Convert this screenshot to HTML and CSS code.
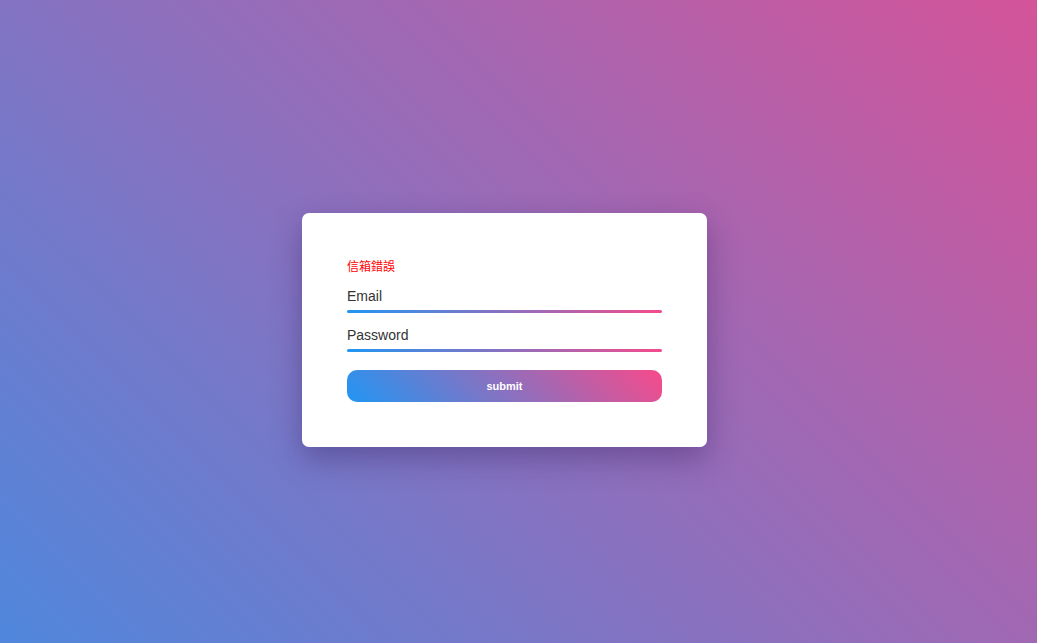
FILE: index.html
```html
<!DOCTYPE html>
<html lang="zh-Hant">
<head>
<meta charset="utf-8">
<title>Login</title>
<link rel="stylesheet" href="styles.css">
</head>
<body>
<main class="page">
  <form class="card">
    <div class="error">信箱錯誤</div>
    <label class="field">
      <input class="input" type="text" placeholder="Email">
      <span class="line"></span>
    </label>
    <label class="field">
      <input class="input" type="password" placeholder="Password">
      <span class="line"></span>
    </label>
    <button class="submit" type="button">submit</button>
  </form>
</main>
</body>
</html>
```
FILE: styles.css
```css
* { box-sizing: border-box; }
html, body {
  margin: 0;
  height: 100%;
}
body {
  font-family: "Liberation Sans", Arial, "Noto Sans CJK TC", sans-serif;
  background: linear-gradient(45deg, #4f87dc 0%, #d45499 100%);
  overflow: hidden;
}
.page {
  display: flex;
  align-items: flex-start;
  justify-content: flex-start;
  padding: 213px 0 0 302px;
  height: 100%;
}
.card {
  width: 405px;
  background: #fff;
  border-radius: 7px;
  padding: 45px;
  display: flex;
  flex-direction: column;
  box-shadow: 0 12px 30px rgba(40, 20, 80, 0.35);
}
.error {
  color: #ff0000;
  font-size: 12px;
  line-height: 14px;
  margin: 2px 0 11px;
  font-family: "Liberation Sans", "Noto Sans CJK TC", sans-serif;
}
.field {
  display: flex;
  flex-direction: column;
  margin-bottom: 11px;
}
.input {
  border: 0;
  outline: none;
  padding: 1px 0 0;
  height: 20px;
  line-height: 19px;
  font-size: 14px;
  font-family: "Liberation Sans", Arial, sans-serif;
  color: #333;
  background: transparent;
  margin-bottom: 5px;
}
.input::placeholder { color: #333; opacity: 1; }
.line {
  height: 3px;
  border-radius: 2px;
  background: linear-gradient(to right, #2196f3, #f44b8c);
}
.submit {
  margin-top: 7px;
  height: 32px;
  border: 0;
  border-radius: 10px;
  background: linear-gradient(45deg, #2196f3, #f74a8a);
  color: #fff;
  font-weight: bold;
  font-size: 11px;
  font-family: "Liberation Sans", Arial, sans-serif;
  cursor: pointer;
}
```
